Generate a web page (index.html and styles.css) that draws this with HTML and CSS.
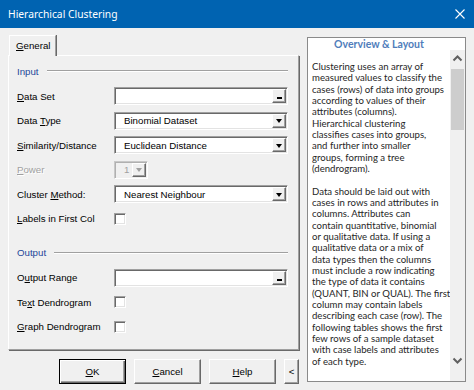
FILE: index.html
```html
<!DOCTYPE html>
<html lang="en">
<head>
  <meta charset="UTF-8" />
  <title>Hierarchical Clustering</title>
  <link rel="stylesheet" href="styles.css">
</head>
<body>
  <div class="window">
    <div class="titlebar">
      <span class="title">Hierarchical Clustering</span>
      <svg class="close" width="10" height="10" viewBox="0 0 10 10"><path d="M0.5 0.5 L9.5 9.5 M9.5 0.5 L0.5 9.5" stroke="#fff" stroke-width="1.1" fill="none"/></svg>
    </div>
    <div class="main">
      <div class="left">
        <div class="tabs">
          <div class="tab"><u>G</u>eneral</div>
        </div>
        <div class="panel">
          <div class="group-title first"><span>Input</span><div class="rule"></div></div>
          <div class="row">
            <label><u>D</u>ata Set</label>
            <div class="field"><span></span><div class="btn-small"><i class="bar"></i></div></div>
          </div>
          <div class="row">
            <label>Data <u>T</u>ype</label>
            <div class="field"><span>Binomial Dataset</span><div class="btn-small"><i class="arrow"></i></div></div>
          </div>
          <div class="row">
            <label><u>S</u>imilarity/Distance</label>
            <div class="field"><span>Euclidean Distance</span><div class="btn-small"><i class="arrow"></i></div></div>
          </div>
          <div class="row">
            <label class="disabled"><u>P</u>ower</label>
            <div class="field small disabled"><span>1</span><div class="btn-small"><i class="arrow"></i></div></div>
          </div>
          <div class="row">
            <label>Cluster <u>M</u>ethod:</label>
            <div class="field"><span>Nearest Neighbour</span><div class="btn-small"><i class="arrow"></i></div></div>
          </div>
          <div class="row">
            <label><u>L</u>abels in First Col</label>
            <div class="check"></div>
          </div>

          <div class="group-title"><span>Output</span><div class="rule"></div></div>
          <div class="row">
            <label>O<u>u</u>tput Range</label>
            <div class="field"><span></span><div class="btn-small"><i class="bar"></i></div></div>
          </div>
          <div class="row">
            <label>Te<u>x</u>t Dendrogram</label>
            <div class="check"></div>
          </div>
          <div class="row">
            <label><u>G</u>raph Dendrogram</label>
            <div class="check"></div>
          </div>
        </div>
        <div class="buttons">
          <div class="button default"><u>O</u>K</div>
          <div class="button"><u>C</u>ancel</div>
          <div class="button"><u>H</u>elp</div>
          <div class="button narrow">&lt;</div>
        </div>
      </div>

      <div class="help">
        <div class="help-title">Overview &amp; Layout</div>
        <div class="help-body">
          <div class="help-text">
            <p>Clustering uses an array of<br>measured values to classify the<br>cases (rows) of data into groups<br>according to values of their<br>attributes (columns).<br>Hierarchical clustering<br>classifies cases into groups,<br>and further into smaller<br>groups, forming a tree<br>(dendrogram).</p>
            <p>Data should be laid out with<br>cases in rows and attributes in<br>columns. Attributes can<br>contain quantitative, binomial<br>or qualitative data. If using a<br>qualitative data or a mix of<br>data types then the columns<br>must include a row indicating<br>the type of data it contains<br>(QUANT, BIN or QUAL). The first<br>column may contain labels<br>describing each case (row). The<br>following tables shows the first<br>few rows of a sample dataset<br>with case labels and attributes<br>of each type.</p>
          </div>
          <div class="scrollbar">
            <svg class="chev" width="15" height="17" viewBox="0 0 15 17"><polyline points="3.5,10.5 7.5,6.5 11.5,10.5" stroke="#606060" stroke-width="2" fill="none"/></svg>
            <div class="thumb"></div>
            <div class="track"></div>
            <svg class="chev" width="15" height="17" viewBox="0 0 15 17"><polyline points="3.5,6.5 7.5,10.5 11.5,6.5" stroke="#606060" stroke-width="2" fill="none"/></svg>
            <div class="tail"></div>
          </div>
        </div>
      </div>
    </div>
  </div>
</body>
</html>
```

FILE: styles.css
```css
body {
  margin: 0;
  background: #f0f0f0;
  font-family: "Liberation Sans", Arial, sans-serif;
  font-size: 9.7px;
  color: #000;
}
u {
  text-decoration: underline;
  text-underline-offset: 1px;
}
.window {
  width: 474px;
  height: 390px;
  overflow: hidden;
}
.titlebar {
  height: 28px;
  background: #0063b1;
  color: #fff;
  display: flex;
  align-items: center;
  justify-content: space-between;
  padding: 0 9px 0 8px;
  font-family: "Noto Sans", sans-serif;
  font-size: 10.3px;
}
.close {
  margin-top: -1px;
}
.main {
  display: flex;
  gap: 8px;
  padding: 0 8px;
}
.left {
  width: 291px;
  padding-top: 7px;
}
.tabs {
  display: flex;
  height: 20px;
  padding-left: 1px;
}
.tab {
  position: relative;
  z-index: 1;
  width: 47px;
  height: 21px;
  box-sizing: border-box;
  background: #f0f0f0;
  border-top: 1px solid #fff;
  border-left: 1px solid #fff;
  border-right: 1px solid #a0a0a0;
  box-shadow: 1px 0 0 #696969;
  padding: 4px 0 0 6px;
}
.panel {
  height: 295px;
  box-sizing: border-box;
  border-top: 1px solid #fff;
  border-left: 1px solid #fff;
  border-right: 1px solid #a0a0a0;
  border-bottom: 1px solid #a0a0a0;
  box-shadow: 1px 1px 0 #696969;
  padding: 0 8px;
}
.group-title {
  display: flex;
  align-items: center;
  gap: 8px;
  height: 14px;
  margin: 18px 2px 9px 0;
  color: #24479a;
}
.group-title.first {
  margin-top: 8px;
}
.rule {
  flex: 1;
  border-top: 1px solid #a0a0a0;
  border-bottom: 1px solid #fff;
}
.row {
  display: flex;
  align-items: center;
  height: 18px;
  margin-bottom: 6.5px;
}
.row label {
  width: 97px;
  flex-shrink: 0;
}
.row label.disabled {
  color: #a0a0a0;
  text-shadow: 1px 1px 0 #fff;
}
.field {
  width: 174px;
  height: 18px;
  box-sizing: border-box;
  background: #fff;
  border: 1px solid;
  border-color: #a0a0a0 #fff #fff #a0a0a0;
  box-shadow: inset 1px 1px 0 #696969, inset -1px -1px 0 #e3e3e3;
  display: flex;
  align-items: stretch;
  justify-content: space-between;
  padding: 1px 1px 1px 9px;
}
.field span {
  align-self: center;
}
.field.small {
  width: 34px;
}
.field.disabled {
  background: #f0f0f0;
  color: #a0a0a0;
  border-color: #c8c8c8 #fff #fff #c8c8c8;
  box-shadow: inset 1px 1px 0 #b0b0b0;
}
.btn-small {
  width: 14px;
  box-sizing: border-box;
  background: #f0f0f0;
  border-top: 1px solid #fff;
  border-left: 1px solid #fff;
  border-right: 1px solid #696969;
  border-bottom: 1px solid #696969;
  box-shadow: inset -1px -1px 0 #a0a0a0;
  display: flex;
  align-items: center;
  justify-content: center;
}
.arrow {
  width: 0;
  height: 0;
  border-left: 3.5px solid transparent;
  border-right: 3.5px solid transparent;
  border-top: 4px solid #000;
  margin-top: 1px;
}
.disabled .arrow {
  border-top-color: #a0a0a0;
}
.bar {
  width: 5px;
  height: 2px;
  background: #000;
  align-self: flex-end;
  margin-bottom: 3px;
}
.check {
  width: 12px;
  height: 12px;
  box-sizing: border-box;
  background: #fff;
  border: 1px solid;
  border-color: #a0a0a0 #fff #fff #a0a0a0;
  box-shadow: inset 1px 1px 0 #696969, inset -1px -1px 0 #e3e3e3;
}
.buttons {
  display: flex;
  justify-content: flex-end;
  gap: 8px;
  margin-top: 9px;
}
.button {
  width: 67px;
  height: 25px;
  box-sizing: border-box;
  background: #f0f0f0;
  border-top: 1px solid #fff;
  border-left: 1px solid #fff;
  border-right: 1px solid #696969;
  border-bottom: 1px solid #696969;
  box-shadow: inset -1px -1px 0 #a0a0a0;
  display: flex;
  align-items: center;
  justify-content: center;
}
.button.default {
  border: 1px solid #000;
  box-shadow: inset 1px 1px 0 #fff, inset -1px -1px 0 #696969, inset -2px -2px 0 #a0a0a0;
}
.button.narrow {
  width: 15px;
}
.help {
  width: 159px;
  height: 345px;
  box-sizing: border-box;
  margin-top: 9px;
  background: #fff;
  border: 1px solid #8a8a8a;
  display: flex;
  flex-direction: column;
}
.help-title {
  height: 11px;
  line-height: 11px;
  text-align: center;
  font-family: Lato, sans-serif;
  font-weight: bold;
  font-size: 10.5px;
  color: #4f7dbb;
  padding: 1px 15px 0 0;
}
.help-body {
  flex: 1;
  display: flex;
}
.help-text {
  flex: 1;
  padding: 11px 0 0 4px;
  font-family: Lato, sans-serif;
  font-size: 9.6px;
  line-height: 11.33px;
  color: #262626;
  white-space: nowrap;
  overflow: hidden;
}
.help-text p {
  margin: 0 0 11.33px;
}
.scrollbar {
  width: 15px;
  background: #f0f0f0;
  display: flex;
  flex-direction: column;
}
.chev {
  display: block;
  flex-shrink: 0;
}
.thumb {
  height: 61px;
  margin: 2px 1px 0;
  background: #cdcdcd;
}
.track {
  flex: 1;
}
.tail {
  height: 12px;
}
```
